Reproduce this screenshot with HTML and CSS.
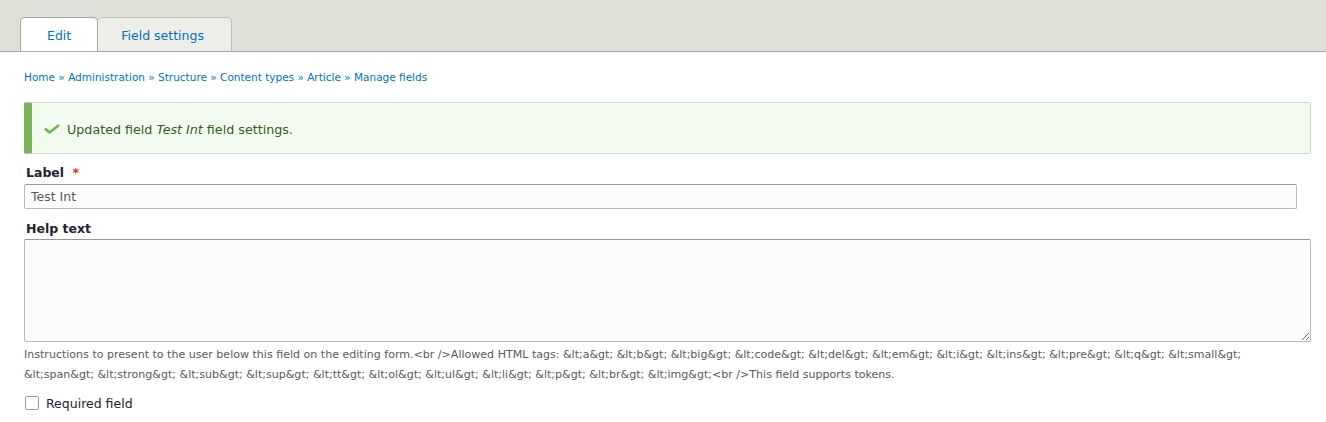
FILE: index.html
```html
<!DOCTYPE html>
<html lang="en">
<head>
<meta charset="utf-8">
<title>Test Int settings</title>
<link rel="stylesheet" href="styles.css">
</head>
<body>
<div class="header">
  <nav class="tabs">
    <a class="tab is-active" href="#">Edit</a>
    <a class="tab" href="#">Field settings</a>
  </nav>
</div>
<div class="page">
  <div class="breadcrumb">
    <a href="#">Home</a> » <a href="#">Administration</a> » <a href="#">Structure</a> » <a href="#">Content types</a> » <a href="#">Article</a> » <a href="#">Manage fields</a>
  </div>
  <div class="message">
    <svg class="check" width="16" height="10" viewBox="0 0 16 10"><path d="M1 4.5 L5.5 8.5 L15 1" fill="none" stroke="#73b355" stroke-width="2.6"/></svg>
    <span>Updated field <em>Test Int</em> field settings.</span>
  </div>
  <div class="field field-first">
    <label class="label">Label <span class="req">*</span></label>
    <input class="text-input" type="text" value="Test Int">
  </div>
  <div class="field field-second">
    <label class="label">Help text</label>
    <textarea class="textarea"></textarea>
    <div class="description">Instructions to present to the user below this field on the editing form.&lt;br /&gt;Allowed HTML tags: &amp;lt;a&amp;gt; &amp;lt;b&amp;gt; &amp;lt;big&amp;gt; &amp;lt;code&amp;gt; &amp;lt;del&amp;gt; &amp;lt;em&amp;gt; &amp;lt;i&amp;gt; &amp;lt;ins&amp;gt; &amp;lt;pre&amp;gt; &amp;lt;q&amp;gt; &amp;lt;small&amp;gt; &amp;lt;span&amp;gt; &amp;lt;strong&amp;gt; &amp;lt;sub&amp;gt; &amp;lt;sup&amp;gt; &amp;lt;tt&amp;gt; &amp;lt;ol&amp;gt; &amp;lt;ul&amp;gt; &amp;lt;li&amp;gt; &amp;lt;p&amp;gt; &amp;lt;br&amp;gt; &amp;lt;img&amp;gt;&lt;br /&gt;This field supports tokens.</div>
  </div>
  <div class="checkbox-row">
    <span class="checkbox"></span>
    <label class="checkbox-label">Required field</label>
  </div>
</div>
</body>
</html>
```

FILE: styles.css
```css
html, body {
  margin: 0;
  padding: 0;
  background: #fff;
}
body {
  font-family: "DejaVu Sans", "Noto Sans", sans-serif;
  font-size: 13px;
  color: #222330;
}
a {
  color: #0074bd;
  text-decoration: none;
}
.header {
  height: 52px;
  box-sizing: border-box;
  background: #e0e0d8;
  border-bottom: 1px solid #a6a6a6;
  padding: 17px 0 0 20px;
}
.tabs {
  display: flex;
  height: 34px;
}
.tab {
  display: flex;
  align-items: center;
  justify-content: center;
  height: 34px;
  box-sizing: border-box;
  padding: 2px 27px 0 23px;
  border: 1px solid #bfbfba;
  border-bottom: none;
  border-radius: 5px 5px 0 0;
  background: #ededea;
  font-size: 12.5px;
}
.tab.is-active {
  background: #fff;
  border-color: #a6a6a6;
  padding: 2px 26px 0;
}
.tab + .tab {
  border-left: none;
}
.page {
  padding: 0 15px 0 24px;
}
.breadcrumb {
  font-size: 10.5px;
  line-height: 16px;
  margin-top: 17px;
  color: #0074bd;
}
.message {
  margin-top: 17px;
  height: 52px;
  box-sizing: border-box;
  display: flex;
  align-items: center;
  background: #f3faef;
  border: 1px solid #c9e1bd;
  border-left: 8px solid #77b259;
  border-radius: 2px;
  color: #325e1c;
  padding: 2px 0 0 12px;
  font-size: 12.7px;
}
.check {
  margin-right: 7px;
}
.message em {
  font-style: italic;
}
.field-first {
  margin-top: 10px;
}
.field-second {
  margin-top: 11px;
}
.label {
  display: block;
  font-weight: 700;
  font-size: 12.5px;
  line-height: 18px;
  padding-left: 2px;
  margin-bottom: 2px;
}
.field-second .label {
  margin-bottom: 1px;
}
.req {
  color: #e62600;
  margin-left: 4px;
}
.text-input {
  display: block;
  width: 1273px;
  height: 25px;
  box-sizing: border-box;
  margin: 0;
  border: 1px solid #b8b8b8;
  border-top-color: #999;
  border-radius: 2px;
  background: #fcfcfa;
  padding: 0 6px;
  font-family: inherit;
  font-size: 12.5px;
  color: #595959;
}
.textarea {
  display: block;
  width: 100%;
  height: 103px;
  box-sizing: border-box;
  margin: 0;
  border: 1px solid #b8b8b8;
  border-top-color: #999;
  border-radius: 2px;
  background: #fcfcfa;
  font-family: inherit;
}
.description {
  font-size: 11.05px;
  line-height: 20px;
  color: #595959;
  margin-top: 3px;
}
.checkbox-row {
  display: flex;
  align-items: center;
  height: 18px;
  margin-top: 9px;
}
.checkbox {
  width: 12px;
  height: 12px;
  border: 1px solid #999;
  border-radius: 2px;
  background: #fff;
  margin-left: 1px;
  margin-right: 7px;
}
.checkbox-label {
  font-size: 12.5px;
  color: #222330;
}
```
